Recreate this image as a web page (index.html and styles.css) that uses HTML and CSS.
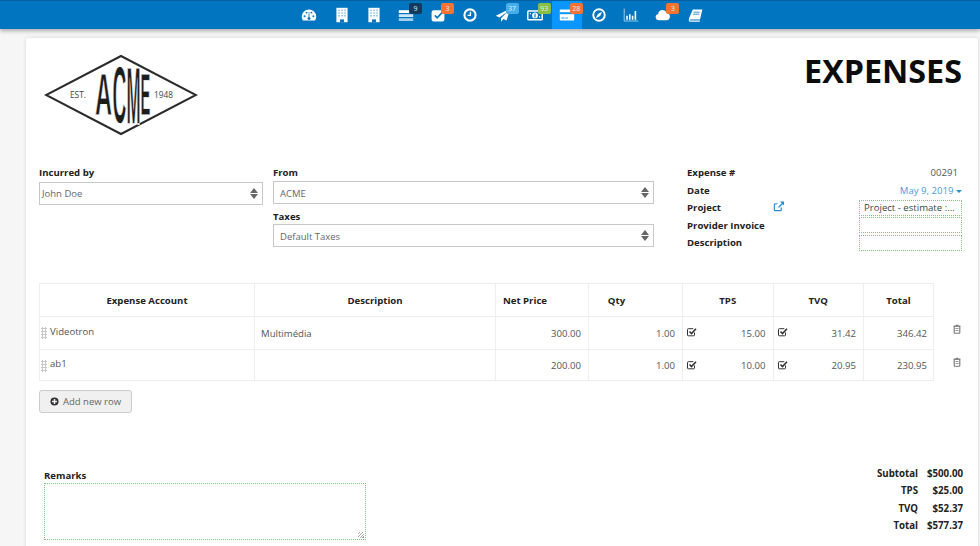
FILE: index.html
```html
<!DOCTYPE html>
<html lang="en">
<head>
    <meta charset="UTF-8">
    <meta name="viewport" content="width=device-width, initial-scale=1.0">
    <title>Expenses</title>
    <link rel="stylesheet" href="styles.css">
</head>
<body>
    <nav class="topbar">
        <a class="nav-item"><svg viewBox="0 0 20 20"><path fill="#fff" d="M10 3a9 9 0 0 0-9 9c0 2 .6 3.600 1.500 4.800h15c.9-1.200 1.500-2.800 1.500-4.800a9 9 0 0 0-9-9z"/><g fill="#0275c0"><circle cx="4.500" cy="11.500" r="1.200"/><circle cx="7" cy="7" r="1.200"/><circle cx="13" cy="7" r="1.200"/><circle cx="15.500" cy="11.500" r="1.200"/><circle cx="10" cy="14.500" r="1.800"/><path d="M9.300 14l.4-8h.6l.4 8z"/></g></svg></a>
        <a class="nav-item"><svg viewBox="0 0 20 20"><path fill="#fff" d="M3 1h14v18H3z"/><path fill="#9fd0ee" d="M5 3h2.500v2H5zm3.800 0h2.500v2H8.800zm3.700 0H15v2h-2.500zM5 6.500h2.500v2H5zm3.800 0h2.500v2H8.800zm3.700 0H15v2h-2.500zM5 10h2.500v2H5zm3.800 0h2.500v2H8.800zm3.700 0H15v2h-2.500z"/><path fill="#0275c0" d="M7.500 15.500h5V19h-5z"/></svg></a>
        <a class="nav-item"><svg viewBox="0 0 20 20"><path fill="#fff" d="M3 1h14v18H3z"/><path fill="#9fd0ee" d="M5 3h2.500v2H5zm3.800 0h2.500v2H8.800zm3.700 0H15v2h-2.500zM5 6.500h2.500v2H5zm3.800 0h2.500v2H8.800zm3.700 0H15v2h-2.500zM5 10h2.500v2H5zm3.800 0h2.500v2H8.800zm3.700 0H15v2h-2.500z"/><path fill="#0275c0" d="M7.500 15.500h5V19h-5z"/></svg></a>
        <a class="nav-item"><svg viewBox="0 0 20 20"><path fill="#fff" d="M1 4h18v3.500H1z"/><path fill="#cfe6f6" d="M1 9h18v3.500H1z"/><path fill="#9fd0ee" d="M1 14h18v3.500H1z"/></svg><span class="badge badge-navy">9</span></a>
        <a class="nav-item"><svg viewBox="0 0 20 20"><path fill="#fff" d="M4.500 4h11A2.500 2.500 0 0 1 18 6.500v9a2.500 2.500 0 0 1-2.500 2.500h-11A2.500 2.500 0 0 1 2 15.500v-9A2.500 2.500 0 0 1 4.500 4z"/><path fill="none" stroke="#0275c0" stroke-width="2" d="M6 10.500l3 3 6-6.500"/></svg><span class="badge badge-orange">3</span></a>
        <a class="nav-item"><svg viewBox="0 0 20 20"><circle cx="10" cy="10" r="7" fill="none" stroke="#fff" stroke-width="2.600"/><path fill="none" stroke="#fff" stroke-width="1.800" d="M10.500 6v4.500H7"/></svg></a>
        <a class="nav-item"><svg viewBox="0 0 20 20"><path fill="#fff" d="M19 2L1 11l4.500 2L16 5.500 7.500 14v4.500l3-3.500 4 2z"/></svg><span class="badge badge-sky">37</span></a>
        <a class="nav-item"><svg viewBox="0 0 20 20"><rect x="1" y="5" width="18" height="11" rx="1" fill="none" stroke="#fff" stroke-width="1.800"/><circle cx="10" cy="10.500" r="3.600" fill="#fff"/><path fill="#0275c0" d="M9.300 8h1.400v5H9.300z"/><path fill="#fff" d="M3.500 7.500h1.500v1.500H3.500zm11.500 4h1.500V13H15z"/></svg><span class="badge badge-green">93</span></a>
        <a class="nav-item active"><svg viewBox="0 0 20 20"><path fill="#fff" d="M2 3h16a1 1 0 0 1 1 1v12a1 1 0 0 1-1 1H2a1 1 0 0 1-1-1V4a1 1 0 0 1 1-1z"/><path fill="#0a95ff" d="M1 6.500h18v2.500H1z"/><path fill="#0a95ff" d="M3 13h4v1.500H3zm5 0h3v1.500H8z"/></svg><span class="badge badge-orange">28</span></a>
        <a class="nav-item"><svg viewBox="0 0 20 20"><circle cx="10" cy="10" r="7.200" fill="none" stroke="#fff" stroke-width="2.400"/><path fill="#fff" d="M14 6l-2.600 5.400L6 14l2.600-5.400z"/></svg></a>
        <a class="nav-item"><svg viewBox="0 0 20 20"><path fill="none" stroke="#9fd0ee" stroke-width="1.200" d="M1.500 2v15.500H19"/><path fill="#fff" d="M4 11h2v5H4zm3.500-2h2v7h-2zm3.500 2h2v5h-2zm3.500-6h2v11h-2z"/></svg></a>
        <a class="nav-item"><svg viewBox="0 0 20 20"><path fill="#fff" d="M5 16.500a4 4 0 0 1-1-7.900 5.500 5.500 0 0 1 10.500-1.500A4.800 4.800 0 0 1 15 16.500z"/></svg><span class="badge badge-orange">3</span></a>
        <a class="nav-item"><svg viewBox="0 0 20 20"><path fill="#fff" d="M6 3h12l-3 12.500H3.500c-1.500 0-1.500 1.500 0 1.500H15l-.4 1.500H3C.8 18.500.8 16 1.300 14z"/><path fill="#0275c0" d="M7 6h7.500v.8H6.800zm-.5 2.500H14v.8H6.300z"/></svg></a>
    </nav>

    <main class="sheet">
        <header class="sheet-head">
            <svg class="logo" viewBox="0 -12 154 112">
                <path fill="none" stroke="#2b2b2b" stroke-width="2" d="M77 1L152 40 77 79 2 40z"/>
                <text x="26" y="43" class="logo-small">EST.</text>
                <text x="110" y="43" class="logo-small">1948</text>
                <text class="logo-name" transform="translate(51 60) scale(0.74 1.83)">A</text>
                <text class="logo-name" transform="translate(68.500 68) scale(0.6 2.53)">C</text>
                <text class="logo-name" transform="translate(82.500 69) scale(0.53 2.57)">M</text>
                <text class="logo-name" transform="translate(96.500 60) scale(0.46 1.83)">E</text>
            </svg>
            <h1>EXPENSES</h1>
        </header>

        <section class="details">
            <div class="field-col">
                <label>Incurred by</label>
                <div class="select select-name">John Doe<span class="updown"></span></div>
            </div>
            <div class="field-col col-from">
                <label>From</label>
                <div class="select">ACME<span class="updown"></span></div>
                <label class="label-next">Taxes</label>
                <div class="select">Default Taxes<span class="updown"></span></div>
            </div>
            <div class="meta">
                <div class="meta-row"><b>Expense #</b><span class="meta-number">00291</span></div>
                <div class="meta-row"><b>Date</b><span class="meta-date">May 9, 2019 <i class="caret"></i></span></div>
                <div class="meta-row"><b>Project</b>
                    <svg class="link-icon" viewBox="0 0 12 12"><path fill="none" stroke="#2a8fd0" stroke-width="1.300" d="M9 7v2.500a1 1 0 0 1-1 1H2.500a1 1 0 0 1-1-1V4a1 1 0 0 1 1-1H5"/><path fill="#2a8fd0" d="M7.500 0.500H12V5l-1.500-1.500-4 4-1-1 4-4z"/></svg>
                    <span class="dashed meta-box">Project - estimate :...</span></div>
                <div class="meta-row"><b>Provider Invoice</b><span class="dashed meta-box"></span></div>
                <div class="meta-row"><b>Description</b><span class="dashed meta-box"></span></div>
            </div>
        </section>

        <table class="lines">
            <colgroup>
                <col class="c-account"><col class="c-desc"><col class="c-price"><col class="c-qty"><col class="c-tax"><col class="c-tax"><col class="c-total">
            </colgroup>
            <thead>
                <tr><th>Expense Account</th><th>Description</th><th class="th-price">Net Price</th><th class="th-qty">Qty</th><th>TPS</th><th>TVQ</th><th>Total</th></tr>
            </thead>
            <tbody>
                <tr class="row-first">
                    <td class="account"><span class="grip"></span>Videotron</td>
                    <td class="desc">Multimédia</td>
                    <td class="num">300.00</td>
                    <td class="num">1.00</td>
                    <td class="num tax"><span class="check"><svg viewBox="0 0 10 10"><path fill="none" stroke="#333" d="M7.500 5.500v2.500a.8.8 0 0 1-.8.8H1.300a.8.8 0 0 1-.8-.8V2.500a.8.8 0 0 1 .8-.8h5"/><path fill="none" stroke="#333" stroke-width="1.600" d="M2.500 4.500l2 2L9 1.800"/></svg></span>15.00</td>
                    <td class="num tax"><span class="check"><svg viewBox="0 0 10 10"><path fill="none" stroke="#333" d="M7.500 5.500v2.500a.8.8 0 0 1-.8.8H1.300a.8.8 0 0 1-.8-.8V2.500a.8.8 0 0 1 .8-.8h5"/><path fill="none" stroke="#333" stroke-width="1.600" d="M2.500 4.500l2 2L9 1.800"/></svg></span>31.42</td>
                    <td class="num num-last">346.42
                        <svg class="trash" viewBox="0 0 10 12"><path fill="none" stroke="#777" stroke-width="1.400" d="M1.500 2.500h7v8a.8.8 0 0 1-.8.8H2.300a.8.8 0 0 1-.8-.8z"/><path fill="#777" d="M.8 1.800h8.400v1.200H.8zM3.500.6h3v1.500h-3zM3 5h4v1H3zm0 2.200h4v1H3z"/></svg></td>
                </tr>
                <tr class="row-second">
                    <td class="account"><span class="grip"></span>ab1</td>
                    <td class="desc"></td>
                    <td class="num">200.00</td>
                    <td class="num">1.00</td>
                    <td class="num tax"><span class="check"><svg viewBox="0 0 10 10"><path fill="none" stroke="#333" d="M7.500 5.500v2.500a.8.8 0 0 1-.8.8H1.300a.8.8 0 0 1-.8-.8V2.500a.8.8 0 0 1 .8-.8h5"/><path fill="none" stroke="#333" stroke-width="1.600" d="M2.500 4.500l2 2L9 1.800"/></svg></span>10.00</td>
                    <td class="num tax"><span class="check"><svg viewBox="0 0 10 10"><path fill="none" stroke="#333" d="M7.500 5.500v2.500a.8.8 0 0 1-.8.8H1.300a.8.8 0 0 1-.8-.8V2.500a.8.8 0 0 1 .8-.8h5"/><path fill="none" stroke="#333" stroke-width="1.600" d="M2.500 4.500l2 2L9 1.800"/></svg></span>20.95</td>
                    <td class="num num-last">230.95
                        <svg class="trash" viewBox="0 0 10 12"><path fill="none" stroke="#777" stroke-width="1.400" d="M1.500 2.500h7v8a.8.8 0 0 1-.8.8H2.300a.8.8 0 0 1-.8-.8z"/><path fill="#777" d="M.8 1.800h8.400v1.200H.8zM3.500.6h3v1.500h-3zM3 5h4v1H3zm0 2.200h4v1H3z"/></svg></td>
                </tr>
            </tbody>
        </table>

        <button class="add-row"><svg viewBox="0 0 10 10"><circle cx="5" cy="5" r="4.500" fill="#333"/><path fill="#f0f0f0" d="M4.200 2.300h1.600v1.900h1.900v1.600H5.800v1.900H4.200V5.800H2.300V4.200h1.900z"/></svg>Add new row</button>

        <section class="sheet-foot">
            <div class="remarks">
                <label>Remarks</label>
                <div class="dashed remarks-box"><span class="resize"></span></div>
            </div>
            <div class="totals">
                <div class="total-row"><b>Subtotal</b><b>$500.00</b></div>
                <div class="total-row"><b>TPS</b><b>$25.00</b></div>
                <div class="total-row"><b>TVQ</b><b>$52.37</b></div>
                <div class="total-row"><b>Total</b><b>$577.37</b></div>
            </div>
        </section>
    </main>
</body>
</html>
```

FILE: styles.css
```css
html, body {
    height: 546px;
    overflow: hidden;
}
body {
    margin: 0;
    font-family: 'Open Sans', sans-serif;
    font-size: 9.600px;
    color: #444;
    background-color: #f6f6f6;
}
.topbar {
    height: 28px;
    display: flex;
    justify-content: center;
    padding-left: 25px;
    background-color: #0275c0;
    border-top: 1px solid #04619e;
    box-shadow: 0 2px 4px rgba(0, 0, 0, 0.3);
}
.nav-item {
    position: relative;
    width: 30px;
    height: 28px;
    margin: 0 1.100px;
    display: flex;
    align-items: center;
    justify-content: center;
}
.nav-item svg {
    width: 16px;
    height: 16px;
}
.nav-item.active {
    background-color: #0a95ff;
}
.badge {
    position: absolute;
    top: 2px;
    left: 18px;
    min-width: 9px;
    height: 11px;
    padding: 0 2px;
    border-radius: 2px;
    font-size: 7px;
    line-height: 11px;
    text-align: center;
    color: #ddeeff;
}
.badge-navy { background-color: #123a5e; }
.badge-orange { background-color: #f47331; }
.badge-sky { background-color: #45aee8; }
.badge-green { background-color: #8cc03c; }
.sheet {
    height: 508px;
    margin: 9px 2px 0 26px;
    padding: 17px 16px 0 13px;
    background: white;
    border-radius: 3px;
    box-shadow: 0 0 4px rgba(0, 0, 0, 0.12);
}
.sheet-head {
    height: 111px;
    display: flex;
    justify-content: space-between;
    align-items: flex-start;
}
.logo {
    width: 154px;
    height: 112px;
    margin: -12px 0 0 5px;
}
.logo-small {
    font-family: 'Open Sans', sans-serif;
    font-size: 8.300px;
    fill: #444;
}
.logo-name {
    font-family: 'Liberation Sans', sans-serif;
    font-size: 32px;
    font-weight: 700;
    fill: #1c1c1c;
    stroke: #fff;
    stroke-width: 0.500px;
}
h1 {
    margin: -4px 0 0;
    font-size: 32.300px;
    line-height: 38px;
    font-weight: 700;
    color: #0c0c0c;
}
.details {
    display: grid;
    grid-template-columns: 224px 381px 298px;
    column-gap: 10px;
    height: 117px;
}
.details .meta {
    margin: -2px 0 0 23px;
}
label {
    display: block;
    font-size: 9.600px;
    line-height: 14px;
    font-weight: 700;
    color: #222;
}
.col-from .select {
    margin-top: 1px;
    line-height: 23px;
}
.label-next {
    margin-top: 6px;
}
.col-from .label-next + .select {
    margin-top: 0;
}
.select {
    position: relative;
    height: 21px;
    margin-top: 2px;
    padding-left: 6px;
    border: 1px solid #c8c8c8;
    font-size: 9.500px;
    line-height: 22px;
    color: #666;
}
.select-name {
    padding-left: 2px;
}
.updown {
    position: absolute;
    right: 4px;
    top: 5px;
    width: 0;
    height: 11px;
    border-left: 4px solid transparent;
    border-right: 4px solid transparent;
}
.updown::before, .updown::after {
    content: "";
    position: absolute;
    left: -4px;
    border-left: 4px solid transparent;
    border-right: 4px solid transparent;
}
.updown::before {
    top: 0;
    border-bottom: 5px solid #666;
}
.updown::after {
    bottom: 0;
    border-top: 5px solid #666;
}
.meta-row {
    position: relative;
    height: 17.500px;
    display: flex;
    justify-content: space-between;
    align-items: center;
}
.meta-row b {
    color: #222;
}
.meta-number {
    padding-right: 4px;
    color: #555;
}
.meta-date {
    color: #4a9ad4;
}
.caret {
    display: inline-block;
    vertical-align: 1px;
    border-left: 3px solid transparent;
    border-right: 3px solid transparent;
    border-top: 3px solid #2a8fd0;
}
.link-icon {
    position: absolute;
    left: 86px;
    top: 2px;
    width: 11px;
    height: 11px;
}
.dashed {
    box-sizing: border-box;
    border: 1px dotted #7fc47f;
}
.meta-box {
    width: 103px;
    height: 16px;
    padding-left: 4px;
    line-height: 14px;
    color: #444;
    white-space: nowrap;
}
.lines {
    width: 894px;
    border-collapse: collapse;
    table-layout: fixed;
}
.c-account { width: 215px; }
.c-desc { width: 241px; }
.c-price { width: 93px; }
.c-qty { width: 94px; }
.c-tax { width: 90.500px; }
.c-total { width: 70px; }
th, td {
    border: 1px solid #eee;
    padding: 0;
    box-sizing: border-box;
}
th {
    height: 33px;
    font-size: 9.600px;
    font-weight: 700;
    color: #222;
}
.th-price {
    padding-right: 34px;
}
.th-qty {
    padding-right: 38px;
}
td {
    font-size: 9.600px;
    color: #555;
}
.row-first td {
    height: 33px;
}
.row-second td {
    height: 31px;
}
.account {
    padding: 0 0 4px 10px;
    position: relative;
}
.grip {
    position: absolute;
    left: 1px;
    top: 10px;
    width: 6px;
    height: 12px;
    background-image: radial-gradient(#c8c8c8 1.200px, transparent 1.200px);
    background-size: 3px 3px;
}
.desc {
    padding-left: 6px;
}
.num {
    position: relative;
    padding-right: 7px;
    text-align: right;
}
.num-last {
    padding-right: 6px;
}
.check {
    position: absolute;
    left: 4px;
    top: 10px;
}
.check svg {
    display: block;
    width: 10px;
    height: 10px;
}
.trash {
    position: absolute;
    right: -28px;
    top: 7px;
    width: 8px;
    height: 10px;
}
.add-row {
    display: flex;
    align-items: center;
    gap: 4px;
    height: 23px;
    width: 93px;
    margin-top: 9px;
    padding: 0 0 0 10px;
    border: 1px solid #ccc;
    border-radius: 3px;
    background-color: #f0f0f0;
    font-family: 'Open Sans', sans-serif;
    font-size: 9.500px;
    color: #666;
}
.add-row svg {
    width: 9px;
    height: 9px;
}
.sheet-foot {
    display: flex;
    justify-content: space-between;
    margin-top: 52px;
}
.remarks {
    margin: 4px 0 0 5px;
    width: 322px;
}
.remarks-box {
    position: relative;
    height: 57px;
}
.resize {
    position: absolute;
    right: 1px;
    bottom: 1px;
    width: 6px;
    height: 6px;
    background: repeating-linear-gradient(135deg, #fff, #fff 1px, #aaa 1px, #aaa 2px);
}
.totals {
    margin-right: -1px;
    width: 120px;
}
.total-row {
    display: grid;
    grid-template-columns: 1fr 45px;
    height: 17.300px;
    font-size: 9.700px;
    line-height: 17px;
    text-align: right;
    color: #222;
}
```
